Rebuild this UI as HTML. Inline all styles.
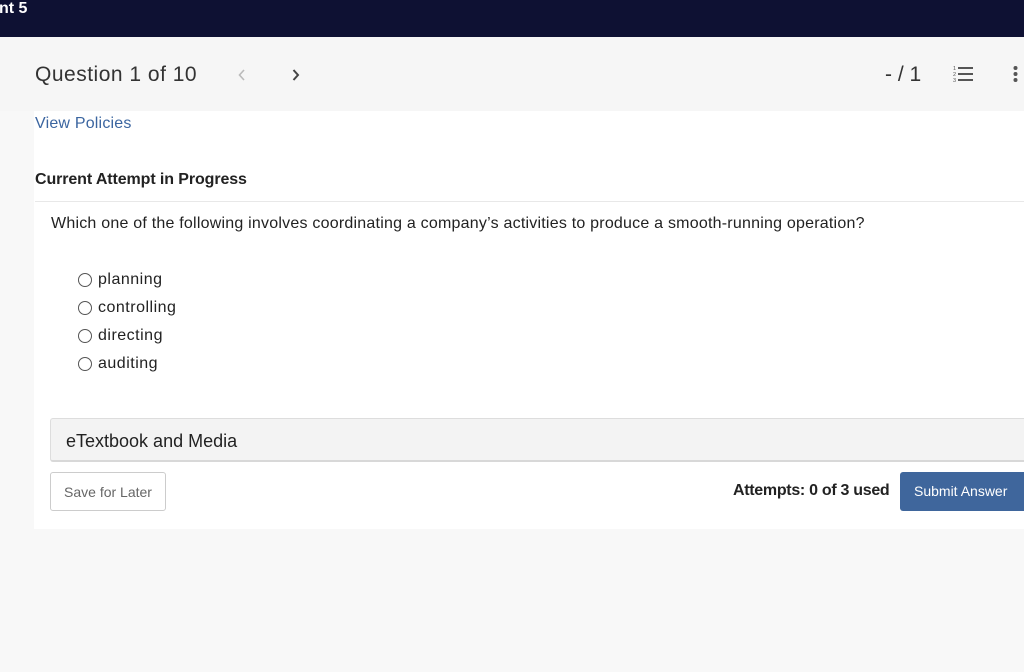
<!DOCTYPE html>
<html><head><meta charset="utf-8"><style>
*{margin:0;padding:0;box-sizing:border-box}
body{width:1024px;height:672px;background:#f8f8f8;font-family:"Liberation Sans",sans-serif;color:#222;position:relative;overflow:hidden}
.top{position:absolute;left:0;top:0;width:1024px;height:37px;background:#0e1133;color:#fff;font-size:16px;font-weight:bold}
.top span{position:absolute;left:-1px;top:0px}
.bar{position:absolute;left:0;top:37px;width:1024px;height:74px;background:#f6f6f6}
.abs{position:absolute;white-space:nowrap}
.main{position:absolute;left:34px;top:111px;width:990px;height:418px;background:#fff}
.radio{position:absolute;width:14px;height:14px;border:1.3px solid #555;border-radius:50%}
.opt{font-size:16px;letter-spacing:0.5px}
</style></head><body>
<div class="top"><span>nt 5</span></div>
<div class="bar">
<div class="abs" style="left:35px;top:26px;font-size:21px;color:#333;letter-spacing:0.5px">Question 1 of 10</div>
<svg class="abs" style="left:237px;top:30px" width="10" height="16"><path d="M7 3 L2.5 8 L7 13" stroke="#bbb" stroke-width="1.6" fill="none"/></svg>
<svg class="abs" style="left:291px;top:30px" width="10" height="16"><path d="M2.5 3 L7 8 L2.5 13" stroke="#444" stroke-width="2" fill="none"/></svg>
<div class="abs" style="left:885px;top:26px;font-size:21px;color:#333">- / 1</div>
<svg class="abs" style="left:953px;top:28px" width="24" height="18">
<text x="0" y="5" font-size="5.5" fill="#555" font-family="Liberation Sans">1</text>
<text x="0" y="11" font-size="5.5" fill="#555" font-family="Liberation Sans">2</text>
<text x="0" y="17" font-size="5.5" fill="#555" font-family="Liberation Sans">3</text>
<rect x="5" y="2" width="15" height="2" fill="#555"/><rect x="5" y="8" width="15" height="2" fill="#555"/><rect x="5" y="14" width="15" height="2" fill="#555"/></svg>
<svg class="abs" style="left:1012px;top:28px" width="8" height="18"><circle cx="3.5" cy="3" r="2" fill="#555"/><circle cx="3.5" cy="9" r="2" fill="#555"/><circle cx="3.5" cy="15" r="2" fill="#555"/></svg>
</div>
<div class="main"></div>
<div class="abs" style="left:35px;top:115px;font-size:16px;color:#3b65a0;letter-spacing:0.2px">View Policies</div>
<div class="abs" style="left:35px;top:171px;font-size:16px;font-weight:bold;color:#222;letter-spacing:-0.1px">Current Attempt in Progress</div>
<div class="abs" style="left:35px;top:201px;width:989px;height:1px;background:#e8e8e8"></div>
<div class="abs" style="left:51px;top:215px;font-size:16px;color:#222;letter-spacing:0.22px">Which one of the following involves coordinating a company’s activities to produce a smooth-running operation?</div>
<div class="radio" style="left:78px;top:273px"></div><div class="abs opt" style="left:98px;top:271px">planning</div>
<div class="radio" style="left:78px;top:301px"></div><div class="abs opt" style="left:98px;top:299px">controlling</div>
<div class="radio" style="left:78px;top:329px"></div><div class="abs opt" style="left:98px;top:327px">directing</div>
<div class="radio" style="left:78px;top:357px"></div><div class="abs opt" style="left:98px;top:355px">auditing</div>
<div class="abs" style="left:50px;top:418px;width:974px;height:44px;background:#f3f3f3;border:1px solid #ddd;border-right:none;border-bottom:2px solid #d8d8d8;border-radius:3px 0 0 3px"></div>
<div class="abs" style="left:66px;top:431px;font-size:18px;color:#222">eTextbook and Media</div>
<div class="abs" style="left:50px;top:472px;width:116px;height:39px;border:1px solid #ccc;border-radius:3px;background:#fff;font-size:14px;color:#666;text-align:center;line-height:38px">Save for Later</div>
<div class="abs" style="left:733px;top:482px;font-size:16px;font-weight:bold;color:#222;letter-spacing:-0.3px">Attempts: 0 of 3 used</div>
<div class="abs" style="left:900px;top:472px;width:124px;height:39px;background:#3f669c;border-radius:3px 0 0 3px;color:#fff;font-size:14px;line-height:39px;padding-left:14px">Submit Answer</div>
</body></html>
